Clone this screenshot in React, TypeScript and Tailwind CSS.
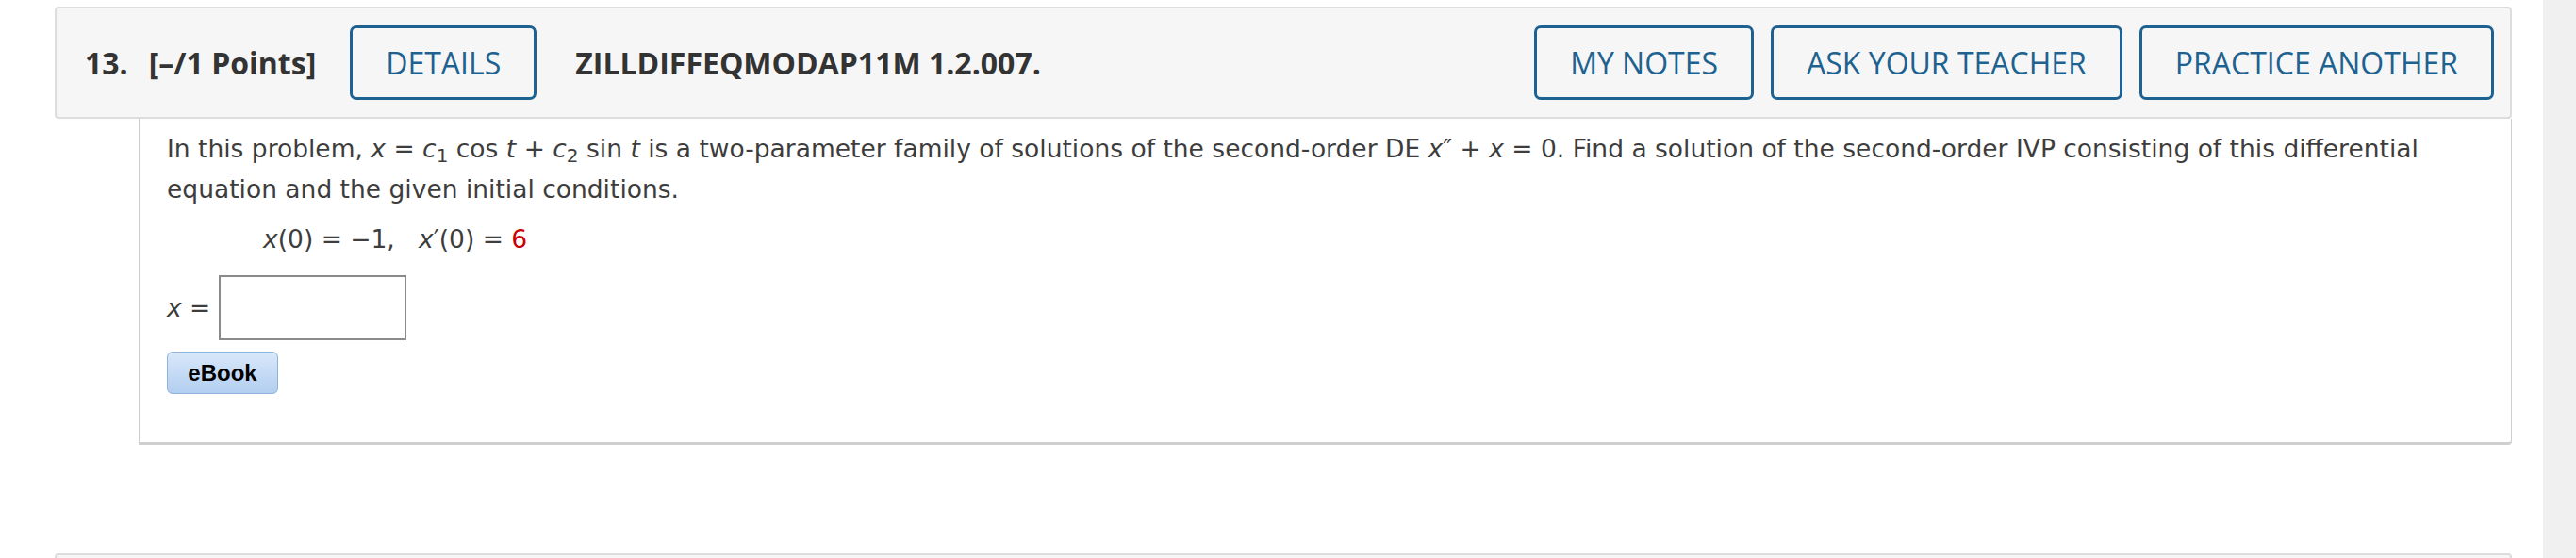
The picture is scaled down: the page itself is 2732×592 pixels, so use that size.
import React from "react";

const HeaderButton = ({ label }: { label: string }) => {
  return (
    <button className="h-[79px] px-[35px] border-[3px] border-[#1d6290] rounded-[7px] text-[32px] leading-none text-[#1d6290] font-['Open_Sans',sans-serif] bg-transparent whitespace-nowrap">
      {label}
    </button>
  );
};

const V = ({ children }: { children: React.ReactNode }) => (
  <span className="italic">{children}</span>
);

const App = () => {
  return (
    <div className="flex w-full h-[592px] bg-white overflow-hidden">
      <div className="flex-1 pt-[7px] pl-[58px] pr-[33px]">
        {/* question header */}
        <div className="h-[119px] flex items-center bg-[#f6f6f6] border-2 border-[#dddddd] rounded-[4px] pl-[30px] pr-[17px] font-['Open_Sans',sans-serif] text-[#333333]">
          <span className="text-[32px] font-bold">13.</span>
          <span className="text-[32px] font-bold ml-[22px]">[–/1 Points]</span>
          <div className="ml-[36px]">
            <HeaderButton label="DETAILS" />
          </div>
          <span className="text-[32px] font-bold ml-[41px]">
            ZILLDIFFEQMODAP11M 1.2.007.
          </span>
          <div className="ml-auto flex gap-[18px]">
            <HeaderButton label="MY NOTES" />
            <HeaderButton label="ASK YOUR TEACHER" />
            <HeaderButton label="PRACTICE ANOTHER" />
          </div>
        </div>

        {/* question body */}
        <div className="ml-[89px] h-[346px] border-x border-b-[3px] border-[#cfcfcf] rounded-br-[4px] pl-[29px] pt-[10px] font-['DejaVu_Sans',sans-serif] text-[26.5px] leading-[43px] text-[#3d3d3d]">
          <p className="whitespace-nowrap">
            In this problem, <V>x</V> = <V>c</V>
            <sub className="text-[20px]">1</sub> cos <V>t</V> + <V>c</V>
            <sub className="text-[20px]">2</sub> sin <V>t</V> is a two-parameter
            family of solutions of the second-order DE <V>x</V>″ + <V>x</V> = 0.
            Find a solution of the second-order IVP consisting of this
            differential
            <br />
            equation and the given initial conditions.
          </p>
          <p className="mt-[10px] pl-[102px] whitespace-pre">
            <V>x</V>(0) = −1,{"   "}
            <V>x</V>′(0) = <span className="text-[#cc0000]">6</span>
          </p>
          <div className="mt-[17px] flex items-center">
            <span>
              <V>x</V> =
            </span>
            <input className="ml-[9px] w-[199px] h-[69px] border-2 border-[#8a8a8a] bg-white outline-none" />
          </div>
          <button className="mt-[12px] w-[118px] h-[45px] rounded-[6px] border border-[#8eb2db] bg-linear-to-b from-[#d9e8fa] to-[#b2cef0] font-['Liberation_Sans',sans-serif] font-bold text-[24px] leading-none text-black">
            eBook
          </button>
        </div>

        {/* next question header */}
        <div className="mt-[115px] h-[119px] bg-[#f6f6f6] border-2 border-[#dddddd] rounded-[4px]" />
      </div>
      <div className="w-[35px] bg-[#f0f0f0]" />
    </div>
  );
};

export default App;
